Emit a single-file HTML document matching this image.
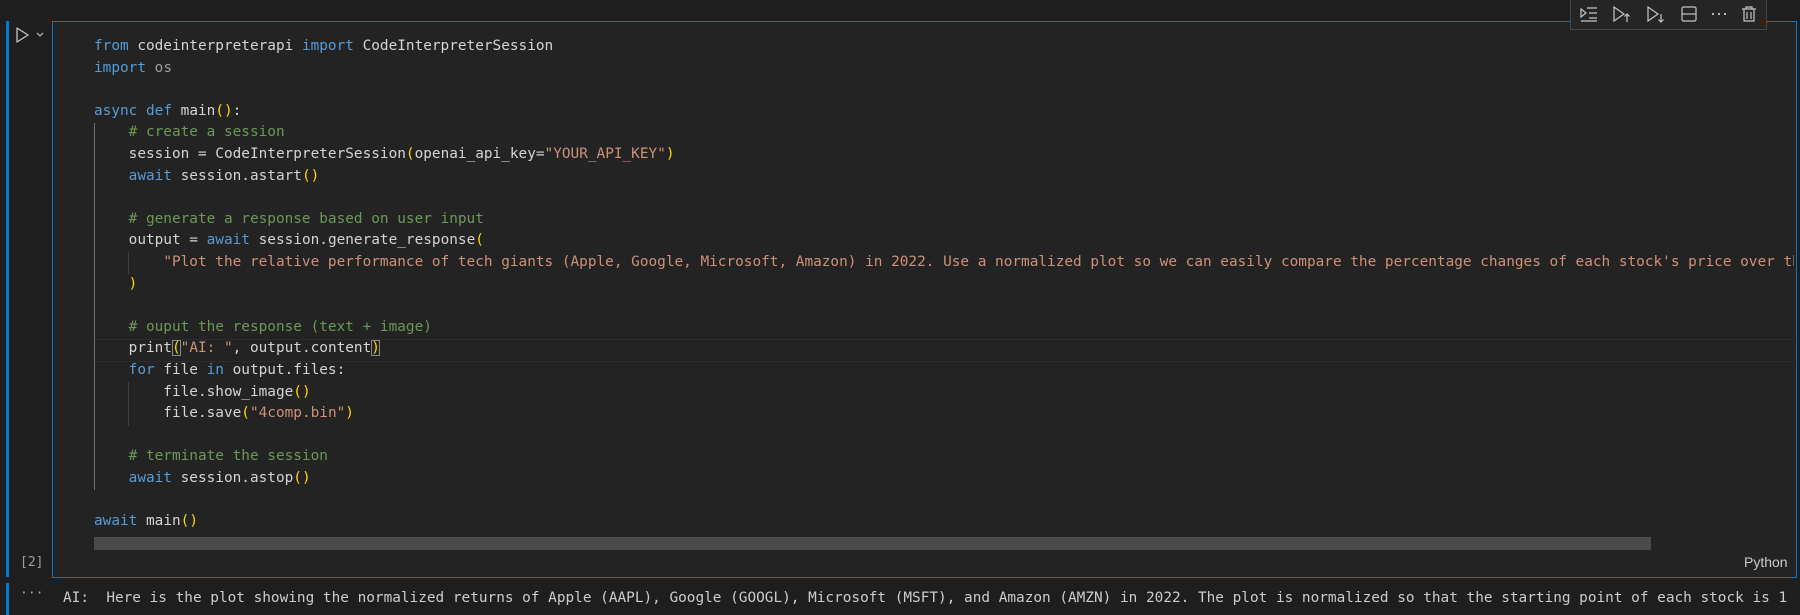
<!DOCTYPE html>
<html><head><meta charset="utf-8"><style>
html,body{margin:0;padding:0;width:1800px;height:615px;overflow:hidden;background:#1e1e1e;}
.mono{font-family:"DejaVu Sans Mono","Liberation Mono",monospace;font-size:14.4px;}
#bar1{position:absolute;left:6px;top:21px;width:3px;height:556px;background:#0078d4;}
#bar2{position:absolute;left:6px;top:583px;width:3px;height:32px;background:#0078d4;}
#cell{position:absolute;left:52px;top:21px;width:1743px;height:555px;border:1px solid #0078d4;background:#232324;}
#code{position:absolute;left:94px;top:36px;line-height:21.6px;color:#d4d4d4;width:1700px;overflow:hidden;}
#code div{height:21.6px;white-space:pre;}
.k{color:#569cd6}.s{color:#ce9178}.c{color:#6a9955}.p{color:#ffd700}.g{color:#9d9d9d}
.bx{outline:1px solid #888;outline-offset:-1px}
.guide{position:absolute;width:1px;background:#404040;}
#scroll{position:absolute;left:94px;top:537px;width:1557px;height:13px;background:#4a4a4a;}
#tb{position:absolute;left:1570px;top:-1px;width:195px;height:29px;background:#252526;border:1px solid #454545;}
#tb svg{position:absolute;top:4px;}
#out{position:absolute;left:63px;top:588px;color:#cccccc;white-space:pre;line-height:20px;}
</style></head><body>
<div id="bar1"></div><div id="bar2"></div>
<div id="cell"></div>
<svg style="position:absolute;left:14px;top:26px" width="36" height="18" viewBox="0 0 36 18">
<path d="M3 2 L14 9 L3 16 Z" fill="none" stroke="#c5c5c5" stroke-width="1.3" stroke-linejoin="round"/>
<path d="M23 7 L26 10 L29 7" fill="none" stroke="#c5c5c5" stroke-width="1.1"/>
</svg>
<div class="guide" style="left:94px;top:123px;height:367px;background:#6e6e6e"></div>
<div class="guide" style="left:128px;top:252px;height:22px"></div>
<div class="guide" style="left:128px;top:382px;height:44px"></div>
<div style="position:absolute;left:95px;top:339px;width:1700px;height:21px;border-top:1px solid #2c2c2c;border-bottom:1px solid #2c2c2c"></div>
<div id="code" class="mono"><div><span class="k">from</span> codeinterpreterapi <span class="k">import</span> CodeInterpreterSession</div><div><span class="k">import</span> <span class="g">os</span></div><div> </div><div><span class="k">async</span> <span class="k">def</span> main<span class="p">()</span>:</div><div>    <span class="c"># create a session</span></div><div>    session = CodeInterpreterSession<span class="p">(</span>openai_api_key=<span class="s">"YOUR_API_KEY"</span><span class="p">)</span></div><div>    <span class="k">await</span> session.astart<span class="p">()</span></div><div> </div><div>    <span class="c"># generate a response based on user input</span></div><div>    output = <span class="k">await</span> session.generate_response<span class="p">(</span></div><div>        <span class="s">"Plot the relative performance of tech giants (Apple, Google, Microsoft, Amazon) in 2022. Use a normalized plot so we can easily compare the percentage changes of each stock's price over the year."</span></div><div>    <span class="p">)</span></div><div> </div><div>    <span class="c"># ouput the response (text + image)</span></div><div>    print<span class="p bx">(</span><span class="s">"AI: "</span>, output.content<span class="p bx">)</span></div><div>    <span class="k">for</span> file <span class="k">in</span> output.files:</div><div>        file.show_image<span class="p">()</span></div><div>        file.save<span class="p">(</span><span class="s">"4comp.bin"</span><span class="p">)</span></div><div> </div><div>    <span class="c"># terminate the session</span></div><div>    <span class="k">await</span> session.astop<span class="p">()</span></div><div> </div><div><span class="k">await</span> main<span class="p">()</span></div></div>
<div id="scroll"></div>
<div class="mono" style="position:absolute;left:20px;top:555px;color:#9d9d9d;font-size:13px">[2]</div>
<div style="position:absolute;left:1744px;top:554px;color:#cccccc;font-family:'Liberation Sans',sans-serif;font-size:14px">Python</div>
<div class="mono" style="position:absolute;left:20px;top:586px;color:#aaa;font-size:13px">···</div>
<div id="out" class="mono">AI:  Here is the plot showing the normalized returns of Apple (AAPL), Google (GOOGL), Microsoft (MSFT), and Amazon (AMZN) in 2022. The plot is normalized so that the starting point of each stock is 1</div>
<div id="tb">
<svg style="left:7px" width="22" height="20" viewBox="0 0 22 20"><path d="M3 5 L8 9 L3 13 Z" fill="none" stroke="#c5c5c5" stroke-width="1.2"/><path d="M9 4H19M11 9H19M11 14H19M3 17H19" stroke="#c5c5c5" stroke-width="1.2"/></svg>
<svg style="left:40px" width="22" height="20" viewBox="0 0 22 20"><path d="M3 3 L13 10 L3 17 Z" fill="none" stroke="#c5c5c5" stroke-width="1.2"/><path d="M16 18V10M13.5 12.5L16 10L18.5 12.5" fill="none" stroke="#c5c5c5" stroke-width="1.2"/></svg>
<svg style="left:74px" width="22" height="20" viewBox="0 0 22 20"><path d="M3 3 L13 10 L3 17 Z" fill="none" stroke="#c5c5c5" stroke-width="1.2"/><path d="M16 10V18M13.5 15.5L16 18L18.5 15.5" fill="none" stroke="#c5c5c5" stroke-width="1.2"/></svg>
<svg style="left:107px" width="22" height="20" viewBox="0 0 22 20"><rect x="4" y="3" width="14" height="14" rx="1.5" fill="none" stroke="#c5c5c5" stroke-width="1.2"/><path d="M4 10H18" stroke="#c5c5c5" stroke-width="1.2"/></svg>
<svg style="left:137px" width="22" height="20" viewBox="0 0 22 20"><circle cx="5" cy="10" r="1.1" fill="#c5c5c5"/><circle cx="11" cy="10" r="1.1" fill="#c5c5c5"/><circle cx="17" cy="10" r="1.1" fill="#c5c5c5"/></svg>
<svg style="left:167px" width="22" height="20" viewBox="0 0 22 20"><path d="M4 5H18M8 5V3H14V5M6 5V17H16V5M9 8V15M13 8V15" fill="none" stroke="#c5c5c5" stroke-width="1.2"/></svg>
</div>
</body></html>
